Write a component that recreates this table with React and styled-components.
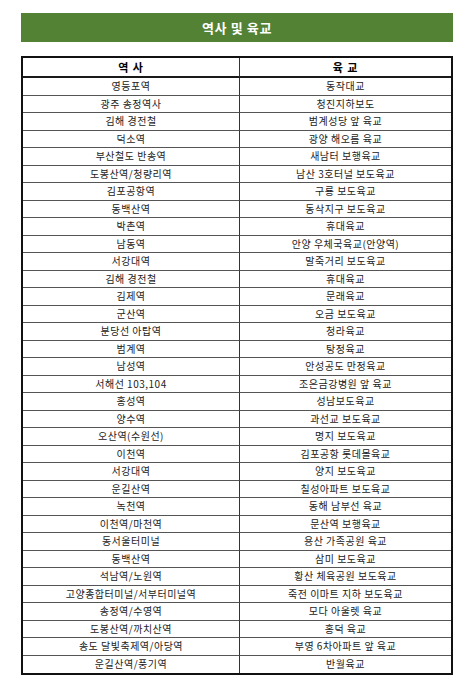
import React from "react";
import styled, { createGlobalStyle } from "styled-components";

const GlobalStyle = createGlobalStyle`
  html, body { margin: 0; padding: 0; background: #ffffff; }
  body { font-family: "Noto Sans CJK KR", "Noto Sans", sans-serif; }
  * { box-sizing: border-box; }
`;

const Page = styled.div`
  width: 474px;
  padding: 13px 21px 10px 21px;
  display: flex;
  flex-direction: column;
  gap: 14px;
`;

const Banner = styled.div`
  height: 29px;
  background: #548235;
  color: #ffffff;
  display: flex;
  align-items: center;
  justify-content: center;
  font-size: 13px;
  font-weight: 700;
  letter-spacing: 0.6px;
`;

const Table = styled.div`
  display: grid;
  grid-template-columns: 217px 1fr;
  border: 2px solid #111;
`;

const Cell = styled.div`
  height: ${(p) => (p.$header ? "20px" : "17.5px")};
  display: flex;
  align-items: center;
  justify-content: center;
  font-size: ${(p) => (p.$header ? "11px" : "10px")};
  font-weight: ${(p) => (p.$header ? 700 : 400)};
  letter-spacing: ${(p) => (p.$header ? "1px" : "0.5px")};
  color: ${(p) => (p.$header ? "#000" : "#222")};
  border-bottom: ${(p) =>
    p.$last ? "none" : p.$header ? "2px solid #1a1a1a" : "1px solid #555"};
  border-right: ${(p) => (p.$left ? "1px solid #333" : "none")};
  white-space: nowrap;
  line-height: 1;
`;

const rows = [
  ["영등포역", "동작대교"],
  ["광주 송정역사", "청진지하보도"],
  ["김해 경전철", "범계성당 앞 육교"],
  ["덕소역", "광양 해오름 육교"],
  ["부산철도 반송역", "새남터 보행육교"],
  ["도봉산역/청량리역", "남산 3호터널 보도육교"],
  ["김포공항역", "구룡 보도육교"],
  ["동백산역", "동삭지구 보도육교"],
  ["박촌역", "휴대육교"],
  ["남동역", "안양 우체국육교(안양역)"],
  ["서강대역", "말죽거리 보도육교"],
  ["김해 경전철", "휴대육교"],
  ["김제역", "문래육교"],
  ["군산역", "오금 보도육교"],
  ["분당선 아탑역", "청라육교"],
  ["범계역", "탕정육교"],
  ["남성역", "안성공도 만정육교"],
  ["서해선 103,104", "조은금강병원 앞 육교"],
  ["홍성역", "성남보도육교"],
  ["양수역", "과선교 보도육교"],
  ["오산역(수원선)", "명지 보도육교"],
  ["이천역", "김포공항 롯데몰육교"],
  ["서강대역", "양지 보도육교"],
  ["운길산역", "칠성아파트 보도육교"],
  ["녹천역", "동해 남부선 육교"],
  ["이천역/마천역", "문산역 보행육교"],
  ["동서울터미널", "용산 가족공원 육교"],
  ["동백산역", "삼미 보도육교"],
  ["석남역/노원역", "황산 체육공원 보도육교"],
  ["고양종합터미널/서부터미널역", "죽전 이마트 지하 보도육교"],
  ["송정역/수영역", "모다 아울렛 육교"],
  ["도봉산역/까치산역", "홍덕 육교"],
  ["송도 달빛축제역/아당역", "부영 6차아파트 앞 육교"],
  ["운길산역/풍기역", "반월육교"],
];

export default function App() {
  return (
    <>
      <GlobalStyle />
      <Page>
        <Banner>역사 및 육교</Banner>
        <Table>
          <Cell $header $left>역 사</Cell>
          <Cell $header>육 교</Cell>
          {rows.map(([a, b], i) => {
            const last = i === rows.length - 1;
            return (
              <React.Fragment key={i}>
                <Cell $left $last={last}>{a}</Cell>
                <Cell $last={last}>{b}</Cell>
              </React.Fragment>
            );
          })}
        </Table>
      </Page>
    </>
  );
}
